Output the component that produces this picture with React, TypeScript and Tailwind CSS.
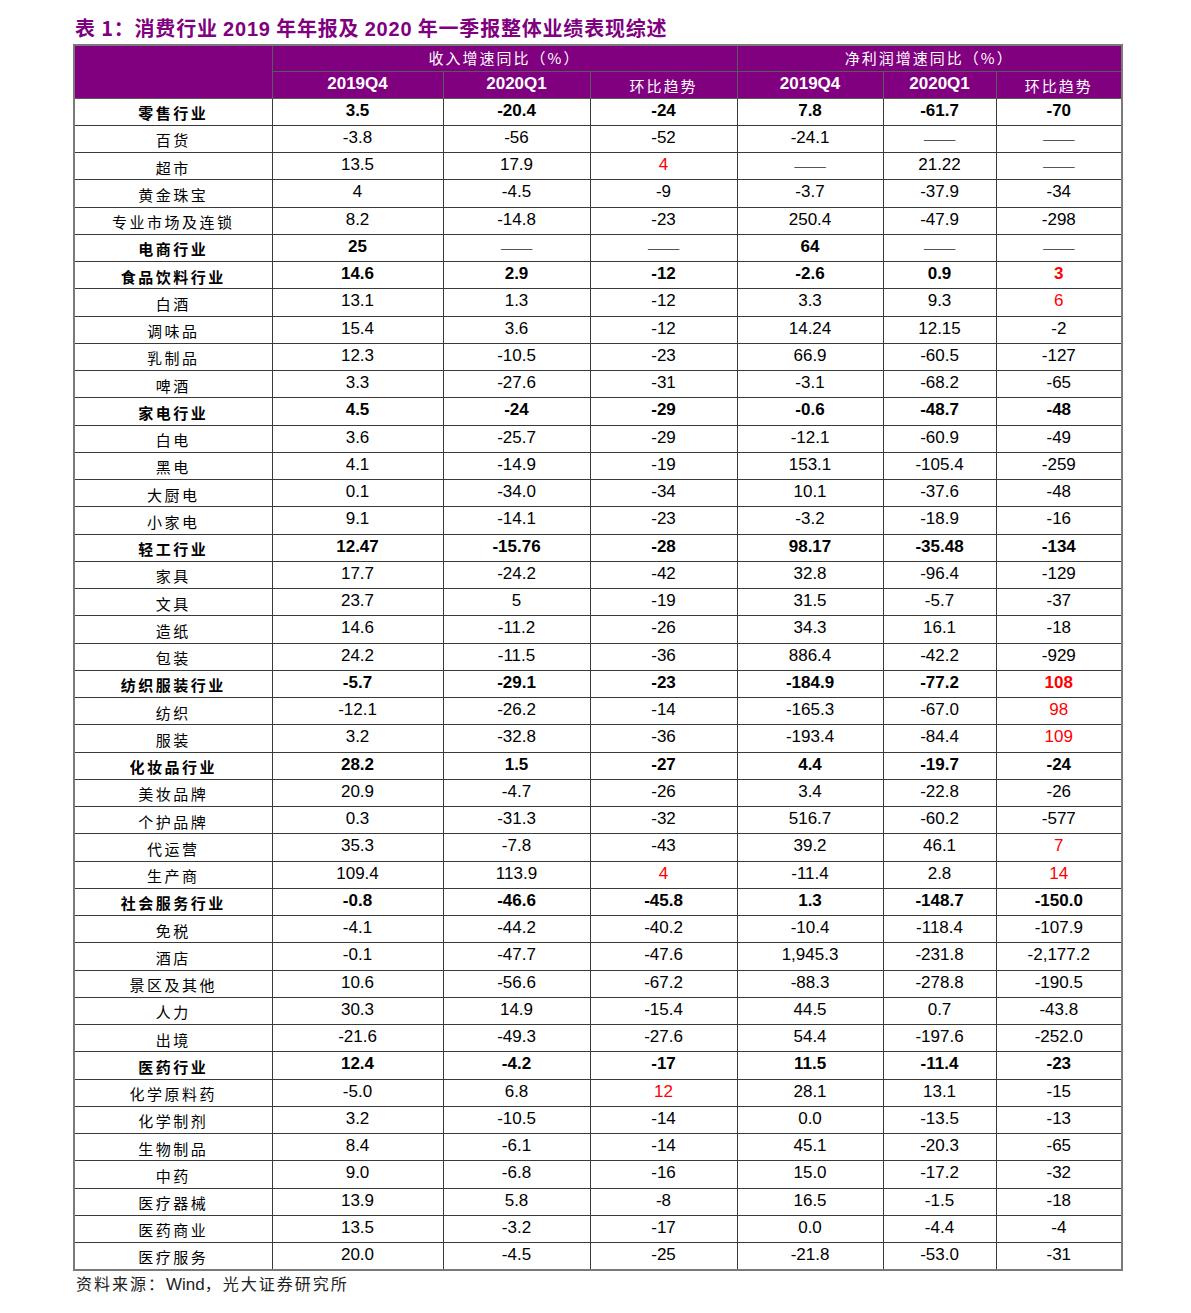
import React from "react";

type Row = {
  name: string;
  bold?: boolean;
  v: string[];
  red?: number[];
};

const D = "——";

const ROWS: Row[] = [
  { name: "零售行业", bold: true, v: ["3.5", "-20.4", "-24", "7.8", "-61.7", "-70"] },
  { name: "百货", v: ["-3.8", "-56", "-52", "-24.1", D, D] },
  { name: "超市", v: ["13.5", "17.9", "4", D, "21.22", D], red: [2] },
  { name: "黄金珠宝", v: ["4", "-4.5", "-9", "-3.7", "-37.9", "-34"] },
  { name: "专业市场及连锁", v: ["8.2", "-14.8", "-23", "250.4", "-47.9", "-298"] },
  { name: "电商行业", bold: true, v: ["25", D, D, "64", D, D] },
  { name: "食品饮料行业", bold: true, v: ["14.6", "2.9", "-12", "-2.6", "0.9", "3"], red: [5] },
  { name: "白酒", v: ["13.1", "1.3", "-12", "3.3", "9.3", "6"], red: [5] },
  { name: "调味品", v: ["15.4", "3.6", "-12", "14.24", "12.15", "-2"] },
  { name: "乳制品", v: ["12.3", "-10.5", "-23", "66.9", "-60.5", "-127"] },
  { name: "啤酒", v: ["3.3", "-27.6", "-31", "-3.1", "-68.2", "-65"] },
  { name: "家电行业", bold: true, v: ["4.5", "-24", "-29", "-0.6", "-48.7", "-48"] },
  { name: "白电", v: ["3.6", "-25.7", "-29", "-12.1", "-60.9", "-49"] },
  { name: "黑电", v: ["4.1", "-14.9", "-19", "153.1", "-105.4", "-259"] },
  { name: "大厨电", v: ["0.1", "-34.0", "-34", "10.1", "-37.6", "-48"] },
  { name: "小家电", v: ["9.1", "-14.1", "-23", "-3.2", "-18.9", "-16"] },
  { name: "轻工行业", bold: true, v: ["12.47", "-15.76", "-28", "98.17", "-35.48", "-134"] },
  { name: "家具", v: ["17.7", "-24.2", "-42", "32.8", "-96.4", "-129"] },
  { name: "文具", v: ["23.7", "5", "-19", "31.5", "-5.7", "-37"] },
  { name: "造纸", v: ["14.6", "-11.2", "-26", "34.3", "16.1", "-18"] },
  { name: "包装", v: ["24.2", "-11.5", "-36", "886.4", "-42.2", "-929"] },
  { name: "纺织服装行业", bold: true, v: ["-5.7", "-29.1", "-23", "-184.9", "-77.2", "108"], red: [5] },
  { name: "纺织", v: ["-12.1", "-26.2", "-14", "-165.3", "-67.0", "98"], red: [5] },
  { name: "服装", v: ["3.2", "-32.8", "-36", "-193.4", "-84.4", "109"], red: [5] },
  { name: "化妆品行业", bold: true, v: ["28.2", "1.5", "-27", "4.4", "-19.7", "-24"] },
  { name: "美妆品牌", v: ["20.9", "-4.7", "-26", "3.4", "-22.8", "-26"] },
  { name: "个护品牌", v: ["0.3", "-31.3", "-32", "516.7", "-60.2", "-577"] },
  { name: "代运营", v: ["35.3", "-7.8", "-43", "39.2", "46.1", "7"], red: [5] },
  { name: "生产商", v: ["109.4", "113.9", "4", "-11.4", "2.8", "14"], red: [2, 5] },
  { name: "社会服务行业", bold: true, v: ["-0.8", "-46.6", "-45.8", "1.3", "-148.7", "-150.0"] },
  { name: "免税", v: ["-4.1", "-44.2", "-40.2", "-10.4", "-118.4", "-107.9"] },
  { name: "酒店", v: ["-0.1", "-47.7", "-47.6", "1,945.3", "-231.8", "-2,177.2"] },
  { name: "景区及其他", v: ["10.6", "-56.6", "-67.2", "-88.3", "-278.8", "-190.5"] },
  { name: "人力", v: ["30.3", "14.9", "-15.4", "44.5", "0.7", "-43.8"] },
  { name: "出境", v: ["-21.6", "-49.3", "-27.6", "54.4", "-197.6", "-252.0"] },
  { name: "医药行业", bold: true, v: ["12.4", "-4.2", "-17", "11.5", "-11.4", "-23"] },
  { name: "化学原料药", v: ["-5.0", "6.8", "12", "28.1", "13.1", "-15"], red: [2] },
  { name: "化学制剂", v: ["3.2", "-10.5", "-14", "0.0", "-13.5", "-13"] },
  { name: "生物制品", v: ["8.4", "-6.1", "-14", "45.1", "-20.3", "-65"] },
  { name: "中药", v: ["9.0", "-6.8", "-16", "15.0", "-17.2", "-32"] },
  { name: "医疗器械", v: ["13.9", "5.8", "-8", "16.5", "-1.5", "-18"] },
  { name: "医药商业", v: ["13.5", "-3.2", "-17", "0.0", "-4.4", "-4"] },
  { name: "医疗服务", v: ["20.0", "-4.5", "-25", "-21.8", "-53.0", "-31"] },
];

const CJK = "font-['Noto_Sans_CJK_SC',sans-serif]";
const NUM = "font-['Liberation_Sans','Noto_Sans_CJK_SC',sans-serif]";

export default function App() {
  return (
    <div className="h-[1313px] w-[1191px] bg-white pl-[73px] pt-[13px]">
      <h1 className={`${CJK} pl-[2px] text-[20px] font-bold leading-[30px] tracking-[0.8px] text-[#800080]`}>
        表 1：消费行业 <span className={NUM}>2019</span> 年年报及 <span className={NUM}>2020</span> 年一季报整体业绩表现综述
      </h1>

      <table className="w-[1048px] table-fixed border-collapse border-2 border-[#7a7a7a]">
        <colgroup>
          <col className="w-[198px]" />
          <col className="w-[171px]" />
          <col className="w-[147px]" />
          <col className="w-[147px]" />
          <col className="w-[146px]" />
          <col className="w-[113px]" />
          <col className="w-[126px]" />
        </colgroup>
        <thead className="bg-[#800080] text-white">
          <tr className="h-[26px]">
            <th rowSpan={2} className="border border-[#5a5a5a]" />
            <th colSpan={3} className={`${CJK} border border-[#5a5a5a] text-[15px] font-normal tracking-[2px]`}>
              收入增速同比（%）
            </th>
            <th colSpan={3} className={`${CJK} border border-[#5a5a5a] text-[15px] font-normal tracking-[2px]`}>
              净利润增速同比（%）
            </th>
          </tr>
          <tr className="h-[27px]">
            {["2019Q4", "2020Q1", "环比趋势", "2019Q4", "2020Q1", "环比趋势"].map((h, i) =>
              h === "环比趋势" ? (
                <th key={i} className={`${CJK} border border-[#5a5a5a] pt-[3px] text-[15px] font-normal tracking-[2px]`}>
                  {h}
                </th>
              ) : (
                <th key={i} className={`${NUM} border border-[#5a5a5a] pb-[2px] text-[17px] font-bold leading-[20px]`}>
                  {h}
                </th>
              )
            )}
          </tr>
        </thead>
        <tbody className="text-black">
          {ROWS.map((r) => (
            <tr key={r.name} className="h-[27.25px]">
              <td
                className={`${CJK} border border-[#3a3a3a] pt-[3px] text-center text-[15px] leading-[20px] tracking-[2.5px] ${
                  r.bold ? "font-bold" : "font-normal"
                }`}
              >
                {r.name}
              </td>
              {r.v.map((val, i) => {
                const red = r.red?.includes(i);
                const dash = val === D;
                return (
                  <td
                    key={i}
                    className={`border border-[#3a3a3a] pb-[2px] text-center leading-[20px] ${
                      dash ? `${CJK} text-[20px] font-light text-[#555]` : `${NUM} text-[17px]`
                    } ${r.bold && !dash ? "font-bold" : ""} ${red ? "text-[#ff0000]" : ""}`}
                  >
                    {val}
                  </td>
                );
              })}
            </tr>
          ))}
        </tbody>
      </table>

      <p className={`${CJK} pl-[3px] text-[16px] leading-[24px] tracking-[2px] text-[#222]`}>
        资料来源：<span className={`${NUM} text-[17px] tracking-normal`}>Wind</span>，光大证券研究所
      </p>
    </div>
  );
}
